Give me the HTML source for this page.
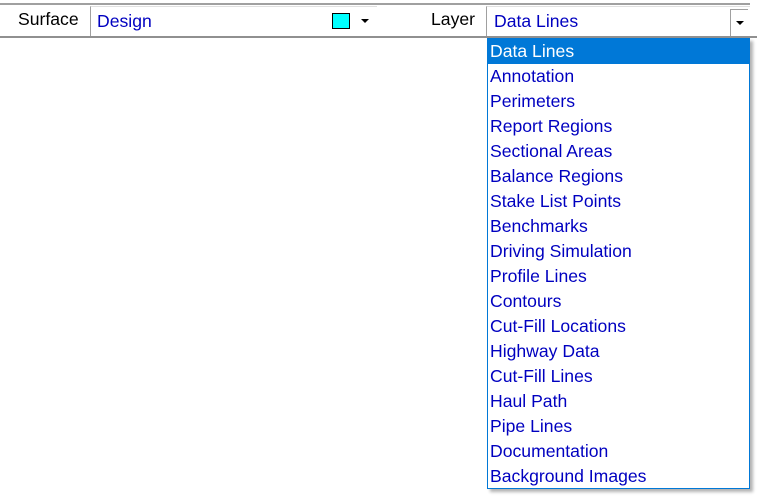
<!DOCTYPE html>
<html><head><meta charset="utf-8"><style>
*{margin:0;padding:0;box-sizing:border-box}
body{width:757px;height:497px;background:#fff;position:relative;overflow:hidden;font-family:"Liberation Sans",Arial,sans-serif;font-size:17.6px}
.abs{position:absolute}
.line{position:absolute;background:#a0a0a0}
.lbl{position:absolute;top:9px;color:#000;font-size:17.6px}
.val{position:absolute;color:#0000c0;font-size:17.6px}
.arrow{position:absolute;width:0;height:0;border-left:4px solid transparent;border-right:4px solid transparent;border-top:4px solid #000}
#dd{position:absolute;left:487px;top:38px;width:263px;height:451px;border:1px solid #0078d7;background:#fff;box-shadow:3px 3px 3px rgba(0,0,0,.3)}
#dd div{height:25px;line-height:25px;padding-left:2px;color:#0000c0;font-size:17.6px;white-space:nowrap}
#dd div.sel{background:#0078d7;color:#fff}
</style></head><body>
<div class="line" style="left:0;top:3px;width:750px;height:2px"></div>
<div class="line" style="left:0;top:36px;width:757px;height:2px;background:#909090"></div>
<div class="lbl" style="left:18px">Surface</div>
<div class="abs" style="left:90px;top:6px;width:287px;height:30px;border-left:1px solid #a0a0a0;border-top:1px solid #e0e0e0"></div>
<div class="val" style="left:97px;top:11px">Design</div>
<div class="abs" style="left:332px;top:13px;width:18px;height:16px;background:#00ffff;border:1px solid #000"></div>
<div class="arrow" style="left:361px;top:19px"></div>
<div class="lbl" style="left:431px">Layer</div>
<div class="abs" style="left:486px;top:6px;width:264px;height:30px;border-left:1px solid #a0a0a0;border-top:1px solid #e0e0e0"></div>
<div class="val" style="left:494px;top:11px">Data Lines</div>
<div class="abs" style="left:730px;top:9px;width:18px;height:27px;border-left:1px solid #a0a0a0;border-top:1px solid #a0a0a0"></div>
<div class="arrow" style="left:736px;top:21px"></div>
<div id="dd">
<div class="sel">Data Lines</div>
<div>Annotation</div>
<div>Perimeters</div>
<div>Report Regions</div>
<div>Sectional Areas</div>
<div>Balance Regions</div>
<div>Stake List Points</div>
<div>Benchmarks</div>
<div>Driving Simulation</div>
<div>Profile Lines</div>
<div>Contours</div>
<div>Cut-Fill Locations</div>
<div>Highway Data</div>
<div>Cut-Fill Lines</div>
<div>Haul Path</div>
<div>Pipe Lines</div>
<div>Documentation</div>
<div>Background Images</div>
</div>
</body></html>
